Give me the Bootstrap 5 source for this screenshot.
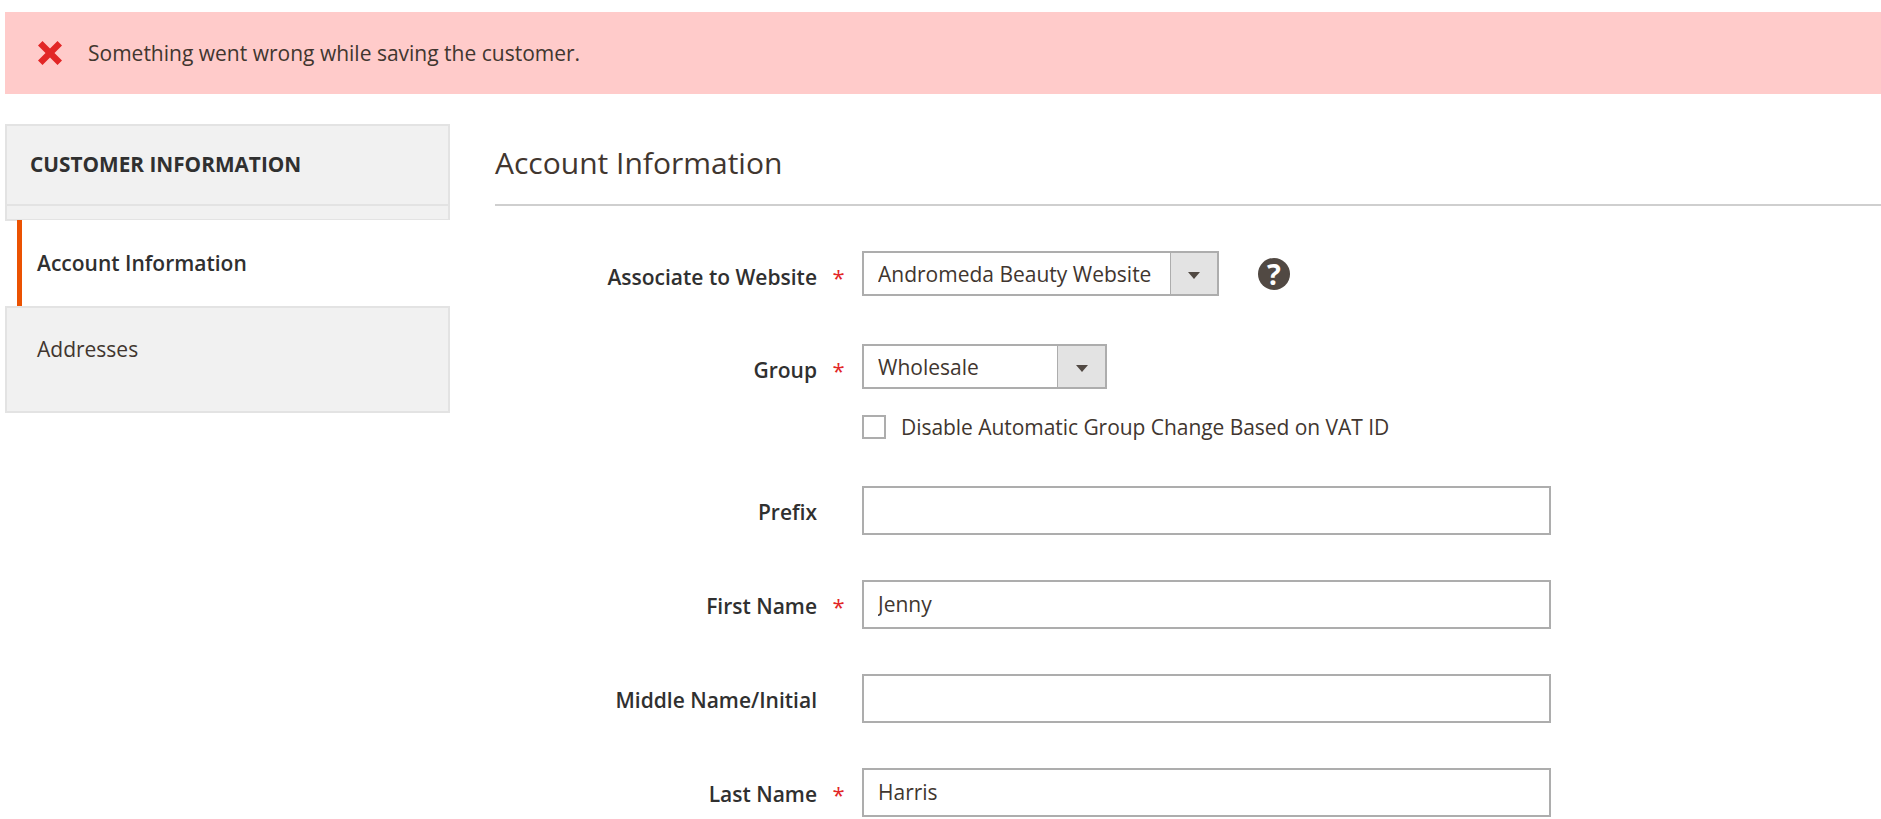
<!DOCTYPE html>
<html lang="en">
<head>
<meta charset="utf-8">
<title>Customer</title>
<link href="https://cdn.jsdelivr.net/npm/bootstrap@5.3.0/dist/css/bootstrap.min.css" rel="stylesheet">
<style>
html,body{height:819px;overflow:hidden;background:#fff}
body{font-family:"Open Sans","Noto Sans",sans-serif;font-size:21px;color:#41362f;padding:12px 0 0 5px}
.err-bar{height:82px;background:#ffcbca;padding-left:33px;gap:26px;margin-bottom:30px;color:#41362f}
.err-text{padding-top:2px}
.side-col{width:445px;flex:none}
.side-head{height:82px;background:#f1f1f1;border:2px solid #e3e3e3;padding-left:23px;font-weight:700;font-size:20.8px;color:#303030;text-transform:uppercase}
.side-strip{height:15px;background:#f1f1f1;border:2px solid #e3e3e3;border-top:0}
.side-item{display:flex;align-items:center;color:#41362f;text-decoration:none;padding-left:30px}
.side-item.is-on{height:87px;background:#fff;font-weight:600;color:#303030;border-left:5px solid #eb5202;margin-left:12px;padding-left:15px;margin-top:-1px}
.side-item.is-off{height:107px;background:#f1f1f1;border:2px solid #e3e3e3;padding-left:30px;padding-bottom:20px;margin-top:-1px}
.main-col{margin-left:45px;min-width:0}
.page-h{height:82px;border-bottom:2px solid #cfcfcf;font-size:30px;font-weight:400;margin:0;color:#41362f;padding-bottom:3px}
.fld-row{display:flex;align-items:flex-start}
.fld-label{width:322px;flex:none;text-align:right;font-weight:600;color:#303030;line-height:28px;padding-top:12px}
.req-mark{width:45px;flex:none;color:#e22626;font-size:22px;text-align:center;line-height:24px;padding-top:14px;padding-right:2px}
.form-control.fld-in,.form-select.fld-in{border:2px solid #adadad;border-radius:0;height:49px;font-size:21px;color:#41362f;padding:0 15px 1px 14px;box-shadow:none}
.fld-in{width:689px}
.sel-wrap{position:relative;height:45px}
.sel-wrap .form-select.fld-in{height:45px;background-image:none;padding:2px 15px 0 14px;width:100%}
.sel-wrap::after{content:"";position:absolute;top:0;right:0;width:49px;height:45px;background:#e3e3e3;border:2px solid #adadad;border-left-width:1px;pointer-events:none}
.sel-wrap::before{content:"";position:absolute;z-index:1;right:19px;top:21px;border-style:solid;border-width:7px 6px 0;border-color:#514943 transparent transparent;pointer-events:none}
.sel-a{width:357px}.sel-b{width:245px}
.sel-b::after{width:50px}
.help-dot{width:32px;height:32px;margin:7px 0 0 39px;background:#514943;color:#fff;border-radius:50%;font-weight:700;font-size:29px;line-height:32px;text-align:center}
.chk-box{width:24px;height:24px;border:2px solid #adadad;background:#fff;border-radius:0;margin:0;flex:none;appearance:none}
.chk-text{margin-left:15px;line-height:24px;letter-spacing:-.05px}
.r1{margin-top:45px}.r2{margin-top:48px}.r3{margin-top:26px;margin-left:367px}.r4{margin-top:47px}.r5{margin-top:45px}
.r6{margin-top:45px}.r7{margin-top:45px}
</style>
</head>
<body>
<div class="err-bar d-flex align-items-center">
  <svg width="24" height="24" viewBox="0 0 24 24" aria-hidden="true"><path fill="#e22626" d="M4.5 0 12 7.5 19.5 0 24 4.5 16.5 12 24 19.5 19.5 24 12 16.5 4.5 24 0 19.5 7.5 12 0 4.5Z"/></svg>
  <span class="err-text">Something went wrong while saving the customer.</span>
</div>
<div class="d-flex">
  <div class="side-col">
    <div class="side-head d-flex align-items-center">Customer Information</div>
    <div class="side-strip"></div>
    <nav class="d-flex flex-column">
      <a class="side-item is-on" href="#">Account Information</a>
      <a class="side-item is-off" href="#">Addresses</a>
    </nav>
  </div>
  <div class="main-col flex-grow-1">
    <h1 class="page-h d-flex align-items-center">Account Information</h1>
    <form>
      <div class="fld-row r1">
        <label class="fld-label">Associate to Website</label><span class="req-mark">*</span>
        <div class="sel-wrap sel-a"><select class="form-select fld-in"><option>Andromeda Beauty Website</option></select></div>
        <div class="help-dot">?</div>
      </div>
      <div class="fld-row r2">
        <label class="fld-label">Group</label><span class="req-mark">*</span>
        <div class="sel-wrap sel-b"><select class="form-select fld-in"><option>Wholesale</option></select></div>
      </div>
      <div class="fld-row r3">
        <input class="chk-box" type="checkbox"><span class="chk-text">Disable Automatic Group Change Based on VAT ID</span>
      </div>
      <div class="fld-row r4">
        <label class="fld-label">Prefix</label><span class="req-mark"></span>
        <input class="form-control fld-in" type="text">
      </div>
      <div class="fld-row r5">
        <label class="fld-label">First Name</label><span class="req-mark">*</span>
        <input class="form-control fld-in" type="text" value="Jenny">
      </div>
      <div class="fld-row r6">
        <label class="fld-label">Middle Name/Initial</label><span class="req-mark"></span>
        <input class="form-control fld-in" type="text">
      </div>
      <div class="fld-row r7">
        <label class="fld-label">Last Name</label><span class="req-mark">*</span>
        <input class="form-control fld-in" type="text" value="Harris">
      </div>
    </form>
  </div>
</div>
<script src="https://cdn.jsdelivr.net/npm/bootstrap@5.3.0/dist/js/bootstrap.bundle.min.js"></script>
</body>
</html>
